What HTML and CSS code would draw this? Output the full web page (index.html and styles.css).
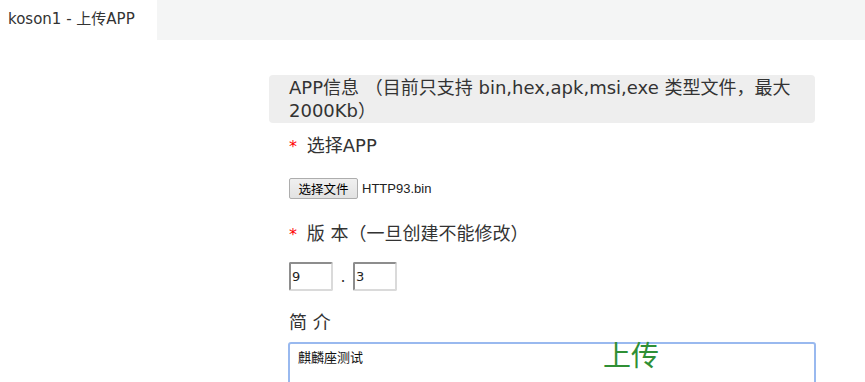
FILE: index.html
```html
<!DOCTYPE html>
<html lang="zh">
<head>
<meta charset="utf-8">
<title>koson1 - 上传APP</title>
<link rel="stylesheet" href="styles.css">
</head>
<body>
<div class="topbar">
  <div class="tab">koson1 - 上传APP</div>
  <div class="tab-rest"></div>
</div>
<div class="main">
  <div class="panel-title">APP信息 （目前只支持 bin,hex,apk,msi,exe 类型文件，最大2000Kb）</div>
  <div class="field">
    <div class="label label-first"><span class="req">*</span> 选择APP</div>
    <div class="file-row">
      <span class="file-btn">选择文件</span>
      <span class="file-name">HTTP93.bin</span>
    </div>
  </div>
  <div class="field">
    <div class="label label-ver"><span class="req">*</span> 版 本（一旦创建不能修改）</div>
    <div class="ver-row">
      <input class="ver-input" type="text" value="9">
      <span class="dot">.</span>
      <input class="ver-input" type="text" value="3">
    </div>
  </div>
  <div class="field">
    <div class="label label-desc">简 介</div>
    <div class="desc-wrap">
      <textarea class="desc">麒麟座测试</textarea>
      <span class="upload">上传</span>
    </div>
  </div>
</div>
</body>
</html>
```
FILE: styles.css
```css
html, body {
  margin: 0;
  padding: 0;
  background: #fff;
  overflow: hidden;
}
body {
  font-family: "DejaVu Sans", "Noto Sans CJK SC", sans-serif;
  color: #333;
}
.topbar {
  display: flex;
  height: 40px;
}
.tab {
  width: 157px;
  box-sizing: border-box;
  padding-left: 8px;
  font-size: 15px;
  line-height: 38px;
  color: #333;
  background: #fff;
  white-space: nowrap;
}
.tab-rest {
  flex: 1;
  background: #f4f5f5;
}
.main {
  margin-left: 269px;
  width: 546px;
  margin-top: 35px;
}
.panel-title {
  background: #eeeeee;
  border-radius: 4px;
  padding: 1px 18px 1px 20px;
  font-size: 18px;
  line-height: 23px;
  color: #333;
}
.field {
  padding-left: 20px;
}
.label {
  font-size: 18px;
  line-height: 24px;
  color: #333;
}
.req {
  display: inline-block;
  width: 12px;
  color: #f00;
  font-size: 16px;
}
.label-first {
  margin-top: 11px;
}
.file-row {
  display: flex;
  align-items: center;
  margin-top: 19px;
  height: 21px;
}
.file-btn {
  box-sizing: border-box;
  width: 69px;
  height: 21px;
  border: 1px solid #adadad;
  border-radius: 2px;
  background: linear-gradient(#f0f0f0, #e2e2e2);
  font-family: "Noto Sans CJK SC", sans-serif;
  font-size: 12.5px;
  line-height: 19px;
  text-align: center;
  color: #000;
}
.file-name {
  margin-left: 4px;
  font-family: "Liberation Sans", sans-serif;
  font-size: 13px;
  color: #222;
}
.label-ver {
  margin-top: 23px;
}
.ver-row {
  display: flex;
  align-items: center;
  margin-top: 15px;
}
.ver-input {
  box-sizing: border-box;
  width: 44px;
  height: 29px;
  margin: 0;
  padding: 0 1px;
  border: 2px solid;
  border-color: #8d8d8d #dadada #dadada #8d8d8d;
  border-radius: 2px;
  font-family: "DejaVu Sans", sans-serif;
  font-size: 13px;
  color: #222;
  outline: none;
}
.dot {
  width: 20px;
  text-align: center;
  font-size: 16px;
  color: #333;
}
.label-desc {
  margin-top: 20px;
}
.desc-wrap {
  position: relative;
  margin-top: 7px;
  margin-left: -1px;
}
.desc {
  display: block;
  box-sizing: border-box;
  width: 528px;
  height: 60px;
  margin: 0;
  padding: 5px 8px;
  border: 2px solid #99b9ef;
  border-radius: 3px;
  font-family: "Noto Sans CJK SC", sans-serif;
  font-size: 13px;
  line-height: 16px;
  color: #111;
  resize: none;
  outline: none;
}
.upload {
  position: absolute;
  left: 315px;
  top: -8px;
  font-family: "Noto Sans CJK SC", sans-serif;
  font-size: 28px;
  line-height: 40px;
  color: #2f8f35;
}
```
